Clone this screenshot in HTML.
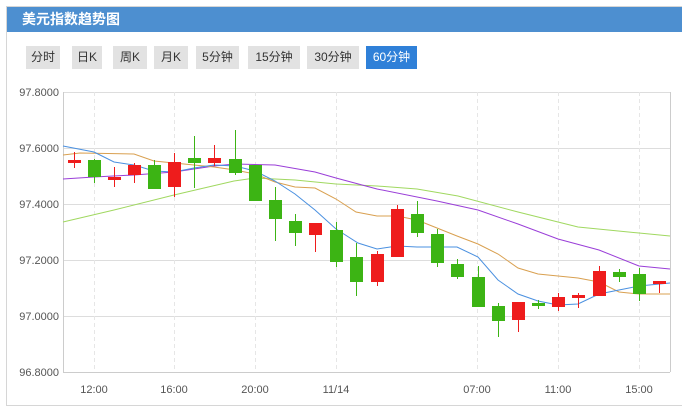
<!DOCTYPE html>
<html><head><meta charset="utf-8"><style>
body{margin:0;background:#fff;width:682px;height:400px;overflow:hidden;font-family:"Liberation Sans","Noto Sans CJK SC",sans-serif}
.box{position:absolute;left:6px;top:6px;width:680px;height:400px;border:1px solid #d6d6d6;box-sizing:border-box}
.hd{position:absolute;left:7px;top:7px;width:675px;height:25px;background:#4d8fd0;color:#fff;font-weight:bold;font-size:14px;line-height:25px;padding-left:15px;box-sizing:border-box}
.b{position:absolute;top:46px;height:23px;line-height:23px;background:#e2e2e2;color:#333;font-size:12px;text-align:center}
.b.on{background:#2f80d8;color:#fff}
</style></head><body>
<div class="box"></div>
<div class="hd">美元指数趋势图</div>
<div class="b" style="left:26px;width:34px">分时</div>
<div class="b" style="left:72px;width:30px">日K</div>
<div class="b" style="left:113px;width:34px">周K</div>
<div class="b" style="left:154px;width:34px">月K</div>
<div class="b" style="left:196px;width:43px">5分钟</div>
<div class="b" style="left:248px;width:52px">15分钟</div>
<div class="b" style="left:307px;width:52px">30分钟</div>
<div class="b on" style="left:366px;width:51px">60分钟</div>
<svg width="682" height="400" style="position:absolute;left:0;top:0" font-family="Liberation Sans,sans-serif" font-size="11" fill="#555">
<g stroke="#ddd" stroke-width="1">
<line x1="63" y1="92.5" x2="670" y2="92.5"/><line x1="63" y1="148.5" x2="670" y2="148.5"/><line x1="63" y1="204.5" x2="670" y2="204.5"/><line x1="63" y1="260.5" x2="670" y2="260.5"/><line x1="63" y1="316.5" x2="670" y2="316.5"/>
</g>
<g stroke="#e6e6e6" stroke-dasharray="4,3">
<line x1="94.5" y1="92" x2="94.5" y2="372"/><line x1="174.5" y1="92" x2="174.5" y2="372"/><line x1="255.5" y1="92" x2="255.5" y2="372"/><line x1="336.5" y1="92" x2="336.5" y2="372"/><line x1="477.5" y1="92" x2="477.5" y2="372"/><line x1="558.5" y1="92" x2="558.5" y2="372"/><line x1="639.5" y1="92" x2="639.5" y2="372"/>
</g>
<g stroke="#ccc"><line x1="63.5" y1="92" x2="63.5" y2="372"/><line x1="63" y1="372.5" x2="670" y2="372.5"/><line x1="670.5" y1="92" x2="670.5" y2="372"/></g>
<g text-anchor="end"><text x="59" y="96">97.8000</text><text x="59" y="152">97.6000</text><text x="59" y="208">97.4000</text><text x="59" y="264">97.2000</text><text x="59" y="320">97.0000</text><text x="59" y="376">96.8000</text></g>
<g text-anchor="middle"><text x="94" y="393">12:00</text><text x="174" y="393">16:00</text><text x="255" y="393">20:00</text><text x="336" y="393">11/14</text><text x="477" y="393">07:00</text><text x="558" y="393">11:00</text><text x="639" y="393">15:00</text></g>
<g fill="none" stroke-width="1">
<polyline stroke="#a0d860" points="63,222 114,210 174,195 234,181 255,178 295,180 336,184 377,186 417,189 458,196 518,212 578,227 639,233 670,236"/>
<polyline stroke="#9a3ed8" points="63,179 94,177 134,175 174,172 214,166 235,164 275,165 315,172 336,178 377,189 437,201 478,210 518,224 558,239 599,250 639,266 670,269"/>
<polyline stroke="#d9a050" points="63,155 80,153 134,154 154,161 174,163 194,165 214,167 235,170 255,174 275,182 295,187 315,188 336,199 356,212 377,216 397,216 417,220 437,228 457,236 478,244 498,254 518,268 538,274 558,276 578,278 599,282 619,292 639,294 670,294"/>
<polyline stroke="#4a90e0" points="63,146 94,152 114,162 134,165 154,171 174,172 194,168 214,165 235,166 255,171 275,181 295,194 315,210 336,229 358,243 377,249 397,246 417,247 437,247 457,247 478,257 498,280 518,294 538,301 558,305 578,304 599,294 619,290 639,286 670,283"/>
</g>
<g id="c"></g>
</svg>
<script>
var d=[[74,'r',160,163,152,168],[94,'g',160,177,159,183],[114,'r',177,180,167,187],[134,'r',165,175,163,183],[154,'g',165,189,160,189],[174,'r',162,187,153,197],[194,'g',158,163,136,188],[214,'r',158,163,145,166],[235,'g',159,173,130,175],[255,'g',165,201,165,201],[275,'g',200,219,187,241],[295,'g',221,233,214,246],[315,'r',223,235,223,252],[336,'g',230,262,222,267],[356,'g',257,282,243,296],[377,'r',254,282,251,286],[397,'r',209,257,205,257],[417,'g',214,233,201,237],[437,'g',234,263,229,267],[457,'g',264,277,259,279],[478,'g',277,307,266,307],[498,'g',306,321,303,337],[518,'r',302,320,302,332],[538,'g',303,306,300,309],[558,'r',297,307,293,311],[578,'r',295,298,293,308],[599,'r',271,296,266,296],[619,'g',272,277,269,282],[639,'g',274,294,268,301],[659,'r',281,284,281,293]];
var s='';d.forEach(function(c){var col=c[1]=='r'?'#ee1c1c':'#3cb414';s+='<line x1="'+(c[0]+.5)+'" y1="'+c[4]+'" x2="'+(c[0]+.5)+'" y2="'+c[5]+'" stroke="'+col+'"/><rect x="'+(c[0]-6)+'" y="'+c[2]+'" width="13" height="'+Math.max(3,c[3]-c[2])+'" fill="'+col+'"/>';});
document.getElementById('c').innerHTML=s;
</script>
</body></html>
